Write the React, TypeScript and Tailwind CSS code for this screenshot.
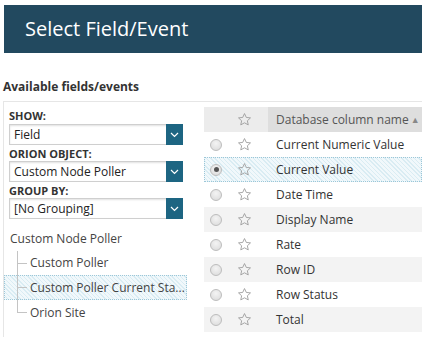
import React from "react";

const hatch =
  "bg-[repeating-linear-gradient(45deg,#d9ecf3_0px,#d9ecf3_1px,#f1f8fb_1px,#f1f8fb_3px)] outline outline-1 outline-dotted outline-[#9cc7d8] -outline-offset-1";

function Chevron() {
  return (
    <svg width="9" height="6" viewBox="0 0 9 6" fill="none">
      <path d="M1 1l3.5 3.5L8 1" stroke="white" strokeWidth="1.2" />
    </svg>
  );
}

function Select({ value }: { value: string }) {
  return (
    <div className="flex h-[21px] w-[174px] border border-[#cfcfcf] bg-white shadow-[inset_0_1px_2px_rgba(0,0,0,0.12)]">
      <div className="flex-1 pl-[4px] text-[12px] leading-[19px] text-[#222]">{value}</div>
      <div className="flex w-[17px] -my-px -mr-px items-center justify-center bg-[#1d6582]">
        <Chevron />
      </div>
    </div>
  );
}

function Star() {
  return (
    <svg width="15" height="15" viewBox="0 0 24 24" fill="none">
      <path
        d="M12 2.5l2.9 6.2 6.7.7-5 4.6 1.4 6.6L12 17.3 6 20.6l1.4-6.6-5-4.6 6.7-.7z"
        stroke="#9a9a9a"
        strokeWidth="1.4"
        strokeLinejoin="miter"
      />
    </svg>
  );
}

function Radio({ checked }: { checked?: boolean }) {
  return (
    <div className="flex h-[12px] w-[12px] items-center justify-center rounded-full border border-[#bdbdbd] bg-[radial-gradient(circle_at_50%_35%,#f4f4f4,#d9d9d9)]">
      {checked && <div className="h-[5px] w-[5px] rounded-full bg-[#555]" />}
    </div>
  );
}

const rows = [
  "Current Numeric Value",
  "Current Value",
  "Date Time",
  "Display Name",
  "Rate",
  "Row ID",
  "Row Status",
  "Total",
];

export default function App() {
  return (
    <div
      className="h-[337px] w-[422px] overflow-hidden bg-white text-[#333]"
      style={{ fontFamily: '"Open Sans", sans-serif' }}
    >
      <div className="ml-[4px] mt-[5px] flex h-[48px] items-center bg-[#22495f] pl-[21px] text-[20px] text-white">
        Select Field/Event
      </div>
      <div className="ml-[3px] mt-[26px] text-[12px] font-bold leading-[15px] text-[#333]">
        Available fields/events
      </div>
      <div className="ml-[3px] mt-[7px] flex h-[300px] border-l border-t border-[#e6e6e6]">
        <div className="w-[190px] pl-[5px] pt-[7px]">
          <div className="text-[11px] font-bold leading-[14px] text-[#333]">SHOW:</div>
          <div className="mt-[1px]">
            <Select value="Field" />
          </div>
          <div className="mt-[2px] text-[11px] font-bold leading-[14px] text-[#333]">ORION OBJECT:</div>
          <Select value="Custom Node Poller" />
          <div className="mt-[2px] text-[11px] font-bold leading-[14px] text-[#333]">GROUP BY:</div>
          <Select value="[No Grouping]" />
          <div className="-ml-[5px] mt-[7px] text-[12px] text-[#444]">
            <div className="flex h-[25px] items-center pl-[6px]">Custom Node Poller</div>
            <div className="relative flex h-[24px] items-center pl-[26px]">
              <div className="absolute left-[13px] top-0 h-full w-px bg-[#c4c4c4]" />
              <div className="absolute left-[13px] top-[12px] h-px w-[10px] bg-[#c4c4c4]" />
              Custom Poller
            </div>
            <div className={`relative flex h-[25px] w-[183px] items-center pl-[26px] ${hatch}`}>
              <div className="absolute left-[13px] top-0 h-full w-px bg-[#c4c4c4]" />
              <div className="absolute left-[13px] top-[12px] h-px w-[10px] bg-[#c4c4c4]" />
              Custom Poller Current Sta...
            </div>
            <div className="relative flex h-[25px] items-center pl-[26px]">
              <div className="absolute left-[13px] top-0 h-[12px] w-px bg-[#c4c4c4]" />
              <div className="absolute left-[13px] top-[12px] h-px w-[10px] bg-[#c4c4c4]" />
              Orion Site
            </div>
          </div>
        </div>
        <div className="ml-[10px] flex-1 pt-[5px]">
          <div className="flex h-[25px] items-center">
            <div className="h-full w-[24px] bg-[#ececec]" />
            <div className="flex h-full w-[40px] items-center justify-center bg-[#ececec] pr-[8px]">
              <Star />
            </div>
            <div className="flex h-full flex-1 items-center bg-[#dedede] pl-[8px] text-[12px] text-[#555]">
              <span className="whitespace-nowrap">Database column name</span>
              <span className="ml-[2px] text-[9px] text-[#888]">▲</span>
            </div>
          </div>
          {rows.map((r, i) => {
            const sel = i === 1;
            const bg = sel ? hatch : i % 2 === 1 ? "bg-[#f3f3f3]" : "bg-white";
            return (
              <div key={r} className={`flex h-[25px] items-center ${bg}`}>
                <div className="flex w-[24px] justify-center">
                  <Radio checked={sel} />
                </div>
                <div className="flex w-[40px] justify-center pr-[8px]">
                  <Star />
                </div>
                <div className="pl-[8px] text-[12px] text-[#333] whitespace-nowrap">{r}</div>
              </div>
            );
          })}
        </div>
      </div>
    </div>
  );
}
